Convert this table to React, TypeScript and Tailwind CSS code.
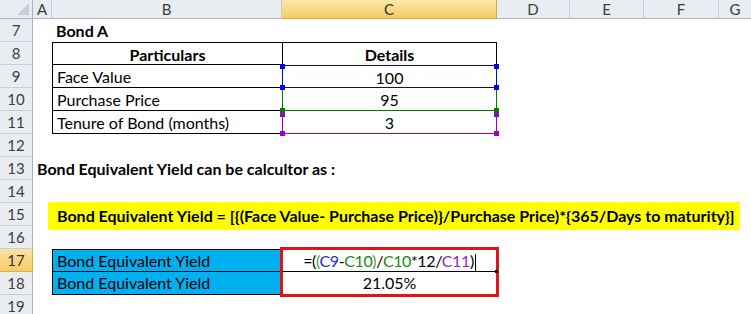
import React from "react";

// column widths measured off the sheet
const colW = {
  A: "w-[19px]",
  B: "w-[230px]",
  C: "w-[215px]",
  D: "w-[73px]",
  E: "w-[74px]",
  F: "w-[75px]",
};

function RowHead({ n, active }: { n: number; active?: boolean }) {
  return (
    <div
      className={`w-[33px] shrink-0 h-full flex items-center justify-center border-r border-b text-[15px] ${
        active
          ? "bg-gradient-to-b from-[#fbe3a0] to-[#f5cc6a] border-b-[#e1b04e] border-r-[#e1a93c] text-[#333]"
          : "bg-[#e9edf2] border-b-[#c8ced6] border-r-[#a9b4c2] text-[#3d3d3d]"
      }`}
    >
      {n}
    </div>
  );
}

function Row({ n, active, children }: { n: number; active?: boolean; children?: React.ReactNode }) {
  return (
    <div className="flex h-[23px] leading-[23px]">
      <RowHead n={n} active={active} />
      {children}
    </div>
  );
}

function Handles({ color, top = true }: { color: string; top?: boolean }) {
  return (
    <>
      {top && <span className={`absolute -top-[2px] -left-[3px] w-[5px] h-[5px] ${color}`} />}
      {top && <span className={`absolute -top-[2px] -right-[3px] w-[5px] h-[5px] ${color}`} />}
      <span className={`absolute -bottom-[3px] -left-[3px] w-[5px] h-[5px] ${color}`} />
      <span className={`absolute -bottom-[3px] -right-[3px] w-[5px] h-[5px] ${color}`} />
    </>
  );
}

export default function App() {
  const cols = ["A", "B", "C", "D", "E", "F"] as const;

  return (
    <div className="relative w-[751px] h-[314px] overflow-hidden bg-white text-black font-['Lato',sans-serif]">
      {/* column headers */}
      <div className="flex h-[19px] leading-[18px] text-[15px]">
        <div className="relative w-[33px] shrink-0 bg-[#e9edf2] border-r border-b border-[#a9b4c2]">
          <span className="absolute right-[3px] bottom-[3px] w-0 h-0 border-l-[12px] border-l-transparent border-b-[12px] border-b-[#c9ced5]" />
        </div>
        {cols.map((c) => (
          <div
            key={c}
            className={`${colW[c]} shrink-0 text-center border-r border-b ${
              c === "C"
                ? "bg-gradient-to-b from-[#fde9a8] to-[#f6ca62] border-[#e0a83c] text-[#333]"
                : "bg-[#e9edf2] border-r-[#c8ced6] border-b-[#a9b4c2] text-[#3d3d3d]"
            }`}
          >
            {c}
          </div>
        ))}
        <div className="flex-1 bg-[#e9edf2] border-b border-[#a9b4c2] text-center text-[#3d3d3d]">G</div>
      </div>

      <Row n={7}>
        <div className={`${colW.A} shrink-0`} />
        <div className={`${colW.B} shrink-0 pl-[4px] font-bold`}>Bond A</div>
      </Row>

      <Row n={8}>
        <div className={`${colW.A} shrink-0`} />
        <div className={`${colW.B} shrink-0 border-l border-t border-b border-black text-center font-bold`}>Particulars</div>
        <div className={`${colW.C} shrink-0 border-l border-r border-t border-black text-center font-bold`}>Details</div>
      </Row>

      <Row n={9}>
        <div className={`${colW.A} shrink-0`} />
        <div className={`${colW.B} shrink-0 border-l border-b border-black pl-[4px]`}>Face Value</div>
        <div className={`${colW.C} relative shrink-0 border border-[#0000f0] text-center z-30`}>
          100
          <Handles color="bg-[#0000f0]" />
        </div>
      </Row>

      <Row n={10}>
        <div className={`${colW.A} shrink-0`} />
        <div className={`${colW.B} shrink-0 border-l border-b border-black pl-[4px]`}>Purchase Price</div>
        <div className={`${colW.C} relative shrink-0 border-l border-r border-b border-[#008000] text-center z-20`}>
          95
          <Handles color="bg-[#008000]" top={false} />
        </div>
      </Row>

      <Row n={11}>
        <div className={`${colW.A} shrink-0`} />
        <div className={`${colW.B} shrink-0 border-l border-b border-black pl-[4px]`}>Tenure of Bond (months)</div>
        <div className={`${colW.C} relative shrink-0 border-l border-r border-b border-[#9b00cc] text-center z-10`}>
          3
          <span className="absolute top-[1px] -left-[3px] w-[5px] h-[5px] bg-[#9b00cc]" />
          <span className="absolute top-[1px] -right-[3px] w-[5px] h-[5px] bg-[#9b00cc]" />
          <Handles color="bg-[#9b00cc]" top={false} />
        </div>
      </Row>

      <Row n={12} />

      <Row n={13}>
        <div className="pl-[4px] font-bold whitespace-nowrap">Bond Equivalent Yield can be calcultor as :</div>
      </Row>

      <Row n={14} />
      <Row n={15} />
      <Row n={16} />

      <div className="flex">
        <div className="flex flex-col">
          <div className="h-[23px] leading-[23px] flex">
            <RowHead n={17} active />
          </div>
          <div className="h-[23px] leading-[23px] flex">
            <RowHead n={18} />
          </div>
        </div>
        <div className={`${colW.A} shrink-0`} />
        <div className={`${colW.B} shrink-0 flex flex-col border-l border-t border-b border-black bg-[#00b0f0] leading-[22px]`}>
          <div className="h-[22px] pl-[4px] border-b border-black">Bond Equivalent Yield</div>
          <div className="h-[22px] pl-[4px]">Bond Equivalent Yield</div>
        </div>
        <div className={`${colW.C} shrink-0 flex flex-col outline-[3px] outline-[#e41414] outline-offset-[-1px] border-t border-b border-transparent leading-[22px]`}>
          <div className="relative h-[22px] text-center border-b border-black tracking-[-0.4px]">
            <span>=(</span>
            <span className="text-[#5a9a2a]">(</span>
            <span className="text-[#1f2fd0]">C9</span>
            <span>-</span>
            <span className="text-[#168a16]">C10</span>
            <span className="text-[#5a9a2a]">)</span>
            <span>/</span>
            <span className="text-[#168a16]">C10</span>
            <span>*12/</span>
            <span className="text-[#9326c4]">C11</span>
            <span>)</span>
            <span className="inline-block w-px h-[17px] bg-black align-[-4px] ml-[1px]" />
            <span className="absolute -right-[1px] -bottom-[2px] w-[3px] h-[3px] bg-black" />
          </div>
          <div className="h-[22px] text-center">21.05%</div>
        </div>
      </div>

      <Row n={19} />

      {/* yellow text box floating over rows 14-16 */}
      <div className="absolute left-[48px] top-[202px] w-[692px] h-[28px] bg-[#ffff00] pl-[9px] leading-[28px] font-bold text-[16px] whitespace-nowrap">
        Bond Equivalent Yield = [{"{"}(Face Value- Purchase Price){"}"}/Purchase Price)*{"{"}365/Days to maturity{"}"}]
      </div>
    </div>
  );
}
